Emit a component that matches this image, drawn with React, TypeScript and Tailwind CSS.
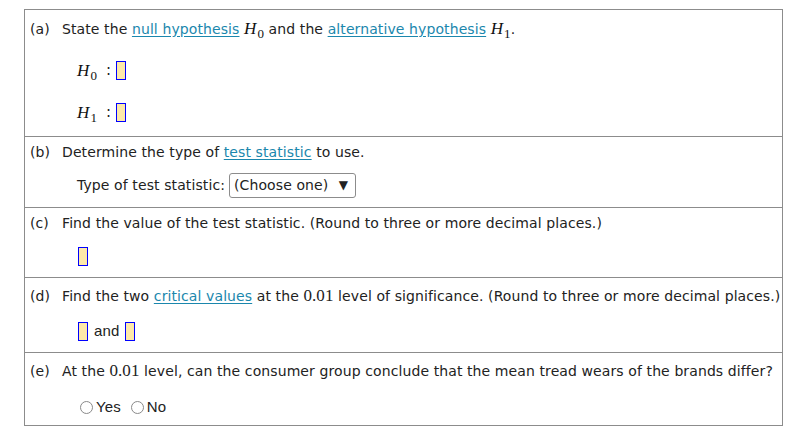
import React from "react";

const font = { fontFamily: '"DejaVu Sans", Verdana, sans-serif' };
const serif = { fontFamily: '"Liberation Serif", "Times New Roman", serif' };

function Link({ children }: { children: React.ReactNode }) {
  return <span className="text-[#1b87ad] underline underline-offset-2">{children}</span>;
}

function H({ sub }: { sub: string }) {
  return (
    <span className="text-[17px] text-[#111] whitespace-nowrap" style={serif}>
      <i>H</i>
      <span className="inline-block text-[13px] translate-y-[4px] ml-[1px]">{sub}</span>
    </span>
  );
}

function Num({ children }: { children: React.ReactNode }) {
  return (
    <span className="text-[17px]" style={serif}>
      {children}
    </span>
  );
}

function Box() {
  return <span className="inline-block w-[10px] h-[19px] bg-[#fde9a9] border border-[#0000ff] align-middle" />;
}

function Radio({ label }: { label: string }) {
  return (
    <label className="flex items-center gap-[3px] mr-[10px]">
      <span className="w-[13px] h-[13px] rounded-full border border-[#8a8a8a] bg-white" />
      <span className="text-[15px] text-[#222]" style={{ fontFamily: '"Liberation Sans", Arial, sans-serif' }}>
        {label}
      </span>
    </label>
  );
}

function Row({
  tag,
  title,
  children,
  className,
}: {
  tag: string;
  title: React.ReactNode;
  children: React.ReactNode;
  className: string;
}) {
  return (
    <div className={`border-t border-[#8c8c8c] first:border-t-0 pl-[5px] ${className}`}>
      <div className="flex items-center h-[18px] leading-[18px] whitespace-nowrap">
        <span className="w-[32px] shrink-0">{tag}</span>
        <span>{title}</span>
      </div>
      <div className="pl-[47px]">{children}</div>
    </div>
  );
}

export default function App() {
  return (
    <div
      className="w-[798px] h-[436px] bg-white pt-[9px] pl-[24px] text-[14px] tracking-[0.1px] text-[#222]"
      style={font}
    >
      <div className="w-[759px] border border-[#8c8c8c]">
        <Row
          tag="(a)"
          className="h-[126px] pt-[10px]"
          title={
            <>
              State the <Link>null hypothesis</Link> <H sub="0" /> and the <Link>alternative hypothesis</Link>{" "}
              <H sub="1" />.
            </>
          }
        >
          <div className="flex items-center h-[19px] mt-[23px]">
            <H sub="0" />
            <span className="ml-[9px] mr-[5px] text-[15px]">:</span>
            <Box />
          </div>
          <div className="flex items-center h-[19px] mt-[23px]">
            <H sub="1" />
            <span className="ml-[9px] mr-[5px] text-[15px]">:</span>
            <Box />
          </div>
        </Row>
        <Row
          tag="(b)"
          className="h-[71px] pt-[6px]"
          title={
            <>
              Determine the type of <Link>test statistic</Link> to use.
            </>
          }
        >
          <div className="flex items-center h-[24px] mt-[12px]">
            <span>Type of test statistic:</span>
            <span className="ml-[4px] flex items-center h-[25px] w-[127px] border border-[#8c8c8c] rounded-[3px] px-[4px]">
              <span>(Choose one)</span>
              <span className="ml-auto mr-[3px] text-[12px]">▼</span>
            </span>
          </div>
        </Row>
        <Row
          tag="(c)"
          className="h-[70px] pt-[6px]"
          title={<>Find the value of the test statistic. (Round to three or more decimal places.)</>}
        >
          <div className="flex items-center h-[19px] mt-[15px] pl-[1px]">
            <Box />
          </div>
        </Row>
        <Row
          tag="(d)"
          className="h-[75px] pt-[9px]"
          title={
            <>
              Find the two <Link>critical values</Link> at the <Num>0.01</Num> level of significance. (Round to three
              or more decimal places.)
            </>
          }
        >
          <div className="flex items-center h-[19px] mt-[17px] pl-[1px]">
            <Box />
            <span
              className="mx-[6px] text-[15px]"
              style={{ fontFamily: '"Liberation Sans", Arial, sans-serif' }}
            >
              and
            </span>
            <Box />
          </div>
        </Row>
        <Row
          tag="(e)"
          className="h-[73px] pt-[9px]"
          title={
            <>
              At the <Num>0.01</Num> level, can the consumer group conclude that the mean tread wears of the brands
              differ?
            </>
          }
        >
          <div className="flex items-center h-[18px] mt-[18px] pl-[3px]">
            <Radio label="Yes" />
            <Radio label="No" />
          </div>
        </Row>
      </div>
    </div>
  );
}
